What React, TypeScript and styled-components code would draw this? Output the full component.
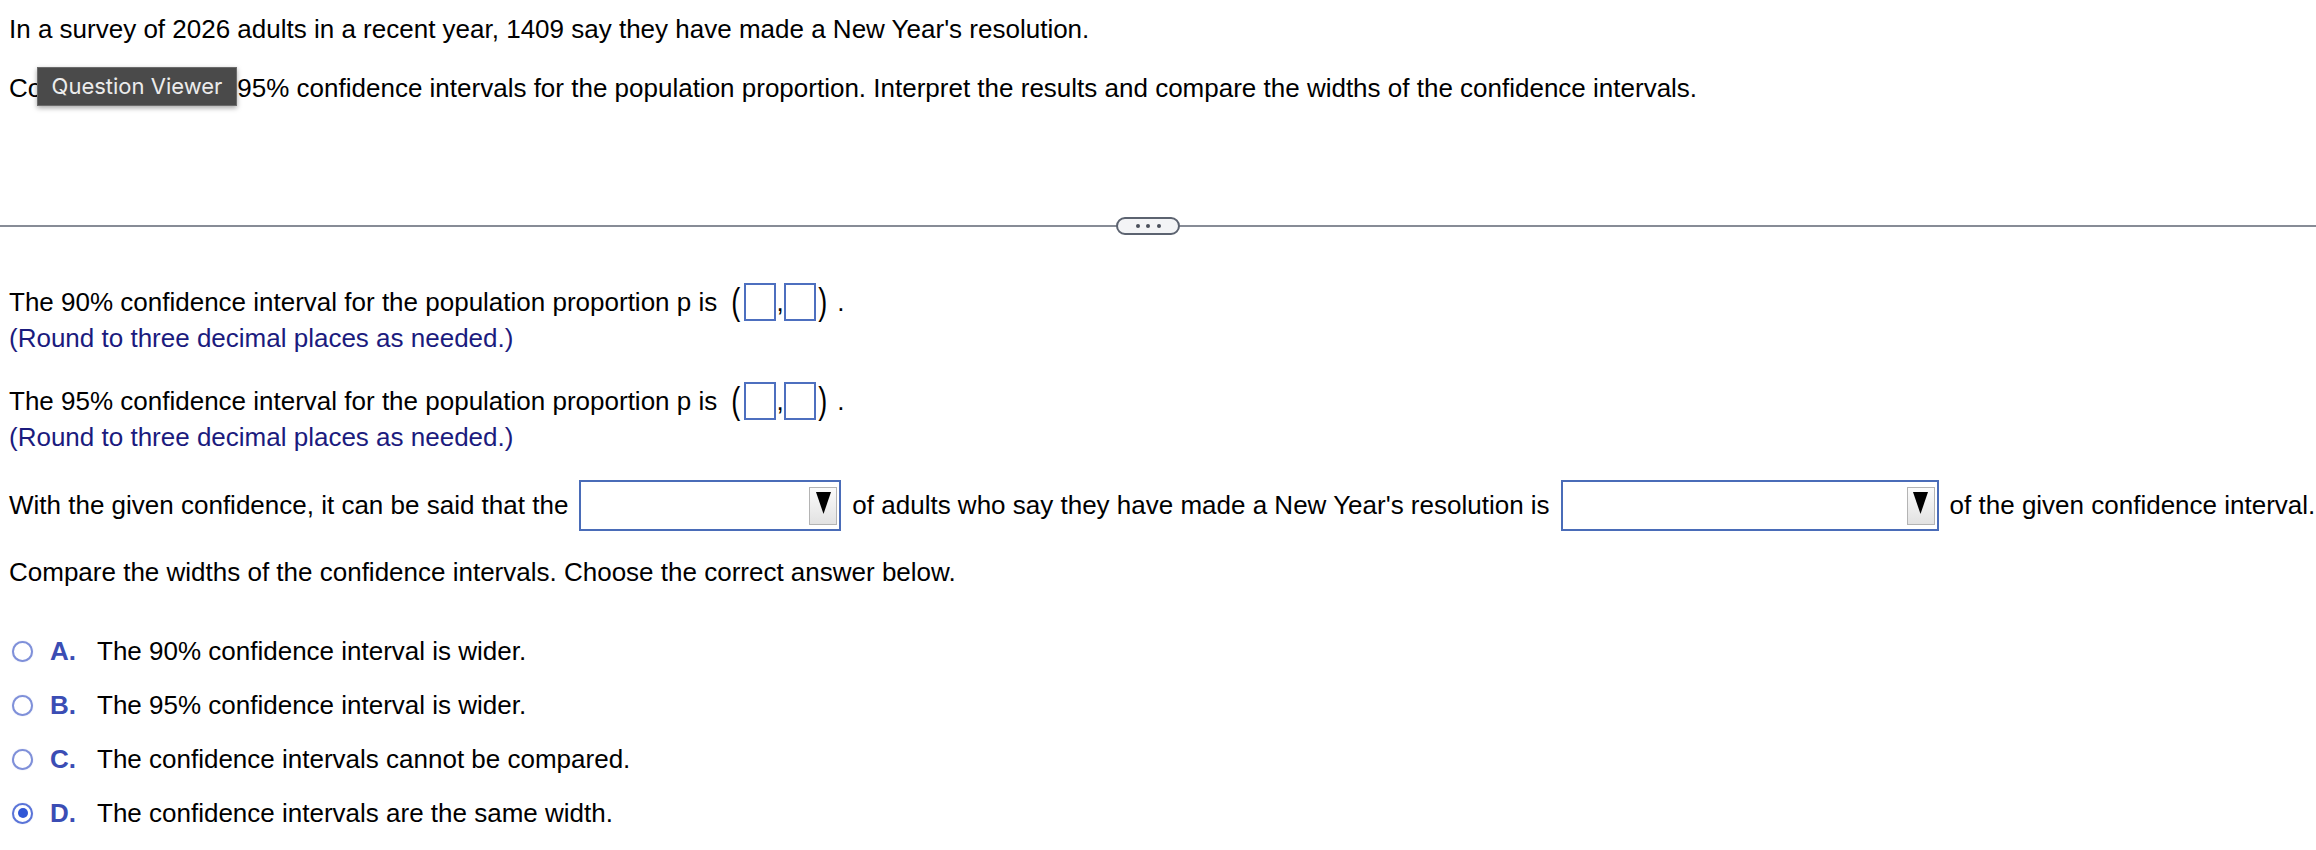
import React from "react";
import styled, { createGlobalStyle } from "styled-components";

const Global = createGlobalStyle`
  html, body { margin: 0; padding: 0; background: #fff; }
  body { font-family: "Liberation Sans", Arial, Helvetica, sans-serif; color: #000; }
`;

const Page = styled.div`
  width: 2316px;
  padding-top: 12px;
  font-size: 26px;
`;

const Para = styled.p<{ $top?: number }>`
  margin: ${(p) => p.$top ?? 0}px 0 0 0;
  padding-left: 9px;
  line-height: 34px;
  white-space: nowrap;
  position: relative;
`;

const Tooltip = styled.div`
  position: absolute;
  left: 37px;
  top: -4px;
  width: 198px;
  height: 37px;
  box-sizing: content-box;
  background: #4a4a4a;
  border: 1px solid #6b6b6b;
  box-shadow: 0 2px 5px rgba(0, 0, 0, 0.35);
  color: #ececec;
  font-family: Inter, "Open Sans", sans-serif;
  font-size: 22px;
  line-height: 37px;
  text-align: center;
`;

const Divider = styled.div`
  position: relative;
  margin-top: 112px;
  height: 18px;
  display: flex;
  align-items: center;
`;

const Line = styled.div`
  flex: 1;
  height: 2px;
  background: #878c96;
`;

const Pill = styled.div`
  position: absolute;
  left: 1116px;
  top: 0;
  width: 64px;
  height: 18px;
  box-sizing: border-box;
  border: 2px solid #5c6370;
  border-radius: 9px;
  background: #f3f4f6;
  display: flex;
  align-items: center;
  justify-content: center;
  gap: 6.5px;
`;

const Dot = styled.span`
  width: 4px;
  height: 4px;
  border-radius: 50%;
  background: #4a4f5a;
`;

const AnswerRow = styled.div<{ $top: number }>`
  margin-top: ${(p) => p.$top}px;
  padding-left: 9px;
  height: 38px;
  display: flex;
  align-items: center;
  white-space: nowrap;
`;

const Paren = styled.span<{ $ml?: number; $mr?: number }>`
  display: inline-block;
  font-size: 27px;
  line-height: 38px;
  transform: scaleY(1.35);
  margin-left: ${(p) => p.$ml ?? 0}px;
  margin-right: ${(p) => p.$mr ?? 0}px;
`;

const Box = styled.span`
  display: inline-block;
  width: 32px;
  height: 38px;
  box-sizing: border-box;
  border: 2px solid #4d6fbf;
  background: #fff;
`;

const Comma = styled.span`
  display: inline-block;
  width: 8px;
  text-align: center;
  line-height: 38px;
`;

const Period = styled.span`
  margin-left: 10px;
`;

const Hint = styled.p<{ $top?: number }>`
  margin: ${(p) => p.$top ?? 0}px 0 0 0;
  padding-left: 9px;
  line-height: 35px;
  color: #1b1b7e;
`;

const Sentence = styled.div`
  margin-top: 25px;
  padding-left: 9px;
  height: 51px;
  display: flex;
  align-items: center;
  gap: 11px;
  white-space: nowrap;
`;

const Select = styled.div<{ $w: number }>`
  width: ${(p) => p.$w}px;
  height: 51px;
  box-sizing: border-box;
  border: 2px solid #4a6cb8;
  background: #fff;
  display: flex;
  justify-content: flex-end;
  align-items: center;
  padding-right: 2px;
  flex: none;
`;

const SelectButton = styled.div`
  width: 28px;
  height: 38px;
  box-sizing: border-box;
  border: 1px solid #b4b4b4;
  background: linear-gradient(#fbfbfb, #e2e2e2);
  display: flex;
  justify-content: center;
  padding-top: 4px;
`;

const Options = styled.div`
  margin-top: 45px;
  display: flex;
  flex-direction: column;
  gap: 20px;
`;

const Option = styled.div`
  display: flex;
  align-items: center;
  height: 34px;
  padding-left: 12px;
  white-space: nowrap;
`;

const Radio = styled.span<{ $checked?: boolean }>`
  width: 21px;
  height: 21px;
  box-sizing: border-box;
  border-radius: 50%;
  border: 2.5px solid ${(p) => (p.$checked ? "#5a74d8" : "#7f90d9")};
  box-shadow: 0 0 1px rgba(90, 110, 210, 0.5);
  background: #fff;
  display: flex;
  align-items: center;
  justify-content: center;
  margin-right: 17px;
  flex: none;
  &::after {
    content: "";
    display: ${(p) => (p.$checked ? "block" : "none")};
    width: 10px;
    height: 10px;
    border-radius: 50%;
    background: #3056d6;
  }
`;

const Letter = styled.span`
  width: 47px;
  font-weight: bold;
  color: #3b4db4;
  line-height: 34px;
`;

const OptText = styled.span`
  line-height: 34px;
`;

const DownTriangle = () => (
  <svg width="15" height="22" viewBox="0 0 15 22">
    <polygon points="0,0 15,0 7.5,22" fill="#000" />
  </svg>
);

const Interval = ({ pct, top }: { pct: string; top: number }) => (
  <>
    <AnswerRow $top={top}>
      <span>The {pct}% confidence interval for the population proportion p is</span>
      <Paren $ml={14} $mr={4}>(</Paren>
      <Box />
      <Comma>,</Comma>
      <Box />
      <Paren $ml={2}>)</Paren>
      <Period>.</Period>
    </AnswerRow>
    <Hint>(Round to three decimal places as needed.)</Hint>
  </>
);

const options = [
  { l: "A.", t: "The 90% confidence interval is wider." },
  { l: "B.", t: "The 95% confidence interval is wider." },
  { l: "C.", t: "The confidence intervals cannot be compared." },
  { l: "D.", t: "The confidence intervals are the same width.", c: true },
];

export default function App() {
  return (
    <Page>
      <Global />
      <Para>
        In a survey of 2026 adults in a recent year, 1409 say they have made a New Year's resolution.
      </Para>
      <Para $top={25}>
        Construct 90% and 95% confidence intervals for the population proportion. Interpret the results and
        compare the widths of the confidence intervals.
        <Tooltip>Question Viewer</Tooltip>
      </Para>
      <Divider>
        <Line />
        <Pill>
          <Dot />
          <Dot />
          <Dot />
        </Pill>
      </Divider>
      <Interval pct="90" top={48} />
      <Interval pct="95" top={26} />
      <Sentence>
        <span>With the given confidence, it can be said that the</span>
        <Select $w={262}>
          <SelectButton>
            <DownTriangle />
          </SelectButton>
        </Select>
        <span>of adults who say they have made a New Year's resolution is</span>
        <Select $w={378}>
          <SelectButton>
            <DownTriangle />
          </SelectButton>
        </Select>
        <span>of the given confidence interval.</span>
      </Sentence>
      <Para $top={24}>Compare the widths of the confidence intervals. Choose the correct answer below.</Para>
      <Options>
        {options.map((o) => (
          <Option key={o.l}>
            <Radio $checked={o.c} />
            <Letter>{o.l}</Letter>
            <OptText>{o.t}</OptText>
          </Option>
        ))}
      </Options>
    </Page>
  );
}
